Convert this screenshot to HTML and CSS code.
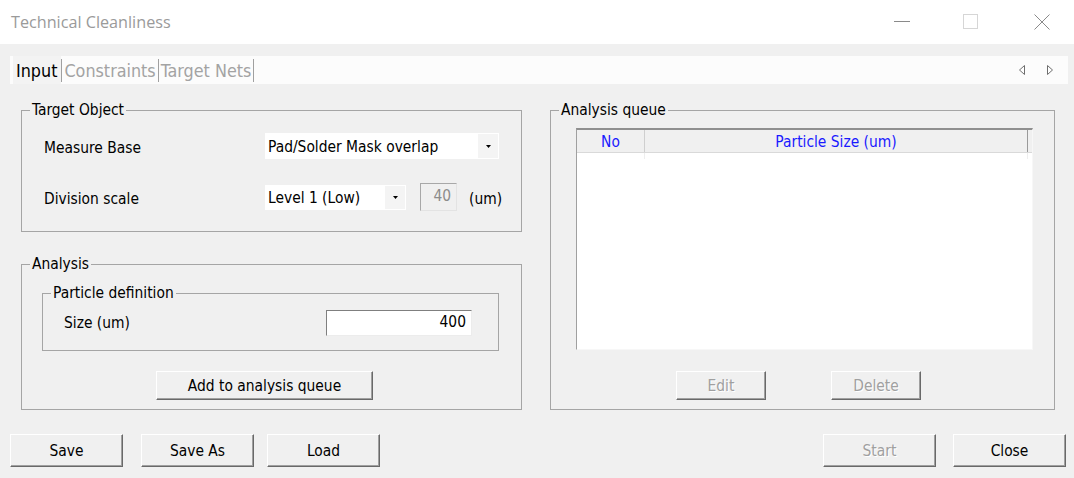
FILE: index.html
```html
<!DOCTYPE html>
<html>
<head>
<meta charset="utf-8">
<title>Technical Cleanliness</title>
<link rel="stylesheet" href="styles.css">
</head>
<body>
<div class="titlebar">
  <span class="title">Technical Cleanliness</span>
  <div class="caption">
    <svg class="ic-min" width="16" height="16" viewBox="0 0 16 16"><line x1="0" y1="7.5" x2="16" y2="7.5" stroke="#8a8a8a" stroke-width="1"/></svg>
    <svg class="ic-max" width="16" height="16" viewBox="0 0 16 16"><rect x="0.5" y="0.5" width="14" height="14" fill="none" stroke="#d6d6d6" stroke-width="1"/></svg>
    <svg class="ic-close" width="16" height="16" viewBox="0 0 16 16"><path d="M0.5 0.5 L15.5 15.5 M15.5 0.5 L0.5 15.5" stroke="#8a8a8a" stroke-width="1"/></svg>
  </div>
</div>

<div class="tabs">
  <span class="tab active">Input</span><span class="sep"></span>
  <span class="tab">Constraints</span><span class="sep"></span>
  <span class="tab">Target Nets</span><span class="sep"></span>
  <div class="tab-arrows">
    <svg width="6" height="10" viewBox="0 0 6 10"><polygon points="5.5,0.5 5.5,9.5 0.5,5" fill="#fff" stroke="#6e6e6e" stroke-width="1"/></svg>
    <svg width="6" height="10" viewBox="0 0 6 10"><polygon points="0.5,0.5 0.5,9.5 5.5,5" fill="#fff" stroke="#6e6e6e" stroke-width="1"/></svg>
  </div>
</div>

<div class="main">
  <div class="col-left">
    <fieldset class="group target">
      <legend>Target Object</legend>
      <div class="rows">
        <div class="row">
          <span class="lbl">Measure Base</span>
          <div class="select wide"><span class="val">Pad/Solder Mask overlap</span><span class="arrow"><svg width="5" height="3" viewBox="0 0 5 3"><polygon points="0,0 5,0 2.5,3" fill="#000"/></svg></span></div>
        </div>
        <div class="row">
          <span class="lbl">Division scale</span>
          <div class="select narrow"><span class="val">Level 1 (Low)</span><span class="arrow"><svg width="5" height="3" viewBox="0 0 5 3"><polygon points="0,0 5,0 2.5,3" fill="#000"/></svg></span></div>
          <div class="num-disabled">40</div>
          <span class="unit">(um)</span>
        </div>
      </div>
    </fieldset>

    <fieldset class="group analysis">
      <legend>Analysis</legend>
      <fieldset class="group particle">
        <legend>Particle definition</legend>
        <div class="size-row">
          <span>Size (um)</span>
          <div class="text-input">400</div>
        </div>
      </fieldset>
      <button class="btn add">Add to analysis queue</button>
    </fieldset>
  </div>

  <fieldset class="group queue">
    <legend>Analysis queue</legend>
    <div class="list">
      <div class="list-head">
        <div class="col-no">No</div>
        <div class="col-size">Particle Size (um)</div>
      </div>
      <div class="list-grid">
        <div class="g-no"></div>
        <div class="g-size"></div>
      </div>
    </div>
    <div class="queue-btns">
      <button class="btn small disabled">Edit</button>
      <button class="btn small disabled delete">Delete</button>
    </div>
  </fieldset>
</div>

<div class="footer">
  <button class="btn foot">Save</button>
  <button class="btn foot saveas">Save As</button>
  <button class="btn foot load">Load</button>
  <button class="btn foot start disabled">Start</button>
  <button class="btn foot close">Close</button>
</div>
</body>
</html>
```

FILE: styles.css
```css
html, body {
  margin: 0;
  padding: 0;
}
body {
  width: 1074px;
  height: 478px;
  overflow: hidden;
  background: #f0f0f0;
  font-family: "DejaVu Sans Condensed", "Liberation Sans", sans-serif;
  font-size: 15.4px;
  color: #000;
}

/* title bar */
.titlebar {
  height: 44px;
  background: #fff;
  display: flex;
  align-items: center;
}
.title {
  margin-left: 11px;
  font-family: "Open Sans", "Liberation Sans", sans-serif;
  font-size: 16.2px;
  color: #9a9a9a;
}
.caption {
  margin-left: auto;
  margin-right: 24px;
  display: flex;
  align-items: center;
}
.caption svg { display: block; }
.ic-min { margin-right: 53px; }
.ic-max { margin-right: 55px; }

/* tabs */
.tabs {
  display: flex;
  align-items: center;
  height: 28px;
  margin: 12px 6px 0 10px;
  padding-left: 3px;
  background: #fcfcfc;
  font-size: 17.8px;
}
.tab {
  height: 28px;
  line-height: 29px;
  padding: 0 2px 0 2px;
  color: #a3a3a3;
}
.tab.active {
  background: #f3f3f3;
  color: #000;
  padding: 0 4px 0 3px;
}
.sep {
  width: 1px;
  height: 23px;
  background: #a0a0a0;
}
.tab-arrows {
  margin-left: auto;
  margin-right: 15px;
  display: flex;
  gap: 22px;
}
.tab-arrows svg { display: block; }

/* main area */
.main {
  display: flex;
  gap: 28px;
  margin-top: 17px;
  padding-left: 21px;
}
.col-left {
  width: 501px;
  display: flex;
  flex-direction: column;
}
fieldset.group {
  margin: 0;
  padding: 0;
  min-width: 0;
  border: 1px solid #a5a5a5;
}
fieldset.group > legend {
  margin-left: 8px;
  padding: 0 2px;
  line-height: 18px;
}

/* target object */
.rows {
  display: flex;
  flex-direction: column;
  gap: 24px;
  padding: 14px 0 20px 22px;
}
.row {
  display: flex;
  align-items: center;
  height: 26px;
}
.row:last-child { height: 28px; }
.lbl {
  width: 221px;
  padding-top: 3px;
}
.select {
  box-sizing: border-box;
  height: 26px;
  background: #fff;
  display: flex;
  align-items: center;
}
.select.wide { width: 234px; }
.select.narrow { width: 141px; height: 25px; }
.select .val {
  flex: 1;
  padding-left: 3px;
  padding-top: 2px;
  white-space: nowrap;
}
.select .arrow {
  width: 20px;
  height: calc(100% - 2px);
  margin-right: 1px;
  background: #f4f4f4;
  display: flex;
  align-items: center;
  justify-content: center;
}
.select .arrow svg { display: block; }
.num-disabled {
  box-sizing: border-box;
  width: 37px;
  height: 28px;
  margin-left: 14px;
  padding-right: 5px;
  border: 1px solid;
  border-color: #a8a8a8 #e3e3e3 #e3e3e3 #a8a8a8;
  background: #f0f0f0;
  color: #8c8c8c;
  text-align: right;
  line-height: 25px;
}
.unit {
  margin-left: 12px;
  padding-top: 4px;
}

/* analysis */
fieldset.analysis { margin-top: 23px; }
fieldset.particle {
  margin: 11px 22px 0 20px;
}
.size-row {
  display: flex;
  align-items: center;
  justify-content: space-between;
  padding: 8px 26px 14px 21px;
}
.text-input {
  box-sizing: border-box;
  width: 146px;
  height: 26px;
  padding-right: 5px;
  border: 1px solid;
  border-color: #7f7f7f #ececec #ececec #7f7f7f;
  background: #fff;
  text-align: right;
  line-height: 23px;
}

/* buttons */
.btn {
  box-sizing: border-box;
  padding: 0;
  margin: 0;
  font: inherit;
  color: #000;
  background: #f0f0f0;
  border: 1px solid;
  border-color: #fff #696969 #696969 #fff;
  box-shadow: inset -1px -1px 0 #a0a0a0;
  border-radius: 0;
}
.btn.disabled {
  color: #a0a0a0;
  text-shadow: 1px 1px 0 #fff;
}
.btn.add {
  width: 217px;
  height: 29px;
  margin: 20px 0 9px 134px;
}

/* queue */
.queue { width: 505px; box-sizing: border-box; }
.list {
  box-sizing: border-box;
  width: 457px;
  height: 222px;
  margin: 9px 0 0 25px;
  border-style: solid;
  border-width: 2px 1px 1px 1px;
  border-color: #8f8f8f #f7f7f7 #f7f7f7 #a0a0a0;
  background: #fff;
}
.list-head {
  display: flex;
  height: 23px;
  background: #f0f0f0;
  border-bottom: 1px solid #d9d9d9;
  box-sizing: border-box;
  color: #1a1aff;
}
.col-no, .col-size {
  text-align: center;
  line-height: 24px;
}
.col-no {
  width: 67px;
  border-right: 1px solid #cfcfcf;
}
.col-size {
  width: 382px;
  border-right: 1px solid #9a9a9a;
}
.list-grid {
  display: flex;
  height: 6px;
}
.g-no { width: 67px; border-right: 1px solid #eeeeee; }
.g-size { width: 382px; border-right: 1px solid #eeeeee; }
.queue-btns {
  display: flex;
  padding: 21px 0 9px 100px;
  margin-left: 25px;
}
.btn.small {
  width: 90px;
  height: 29px;
}
.btn.delete { margin-left: 65px; }

/* footer */
.footer {
  display: flex;
  margin-top: 24px;
  padding: 0 8px 0 10px;
}
.btn.foot {
  width: 113px;
  height: 33px;
}
.btn.saveas { margin-left: 18px; }
.btn.load { margin-left: 13px; }
.btn.start { margin-left: auto; }
.btn.close { margin-left: 17px; }
```
